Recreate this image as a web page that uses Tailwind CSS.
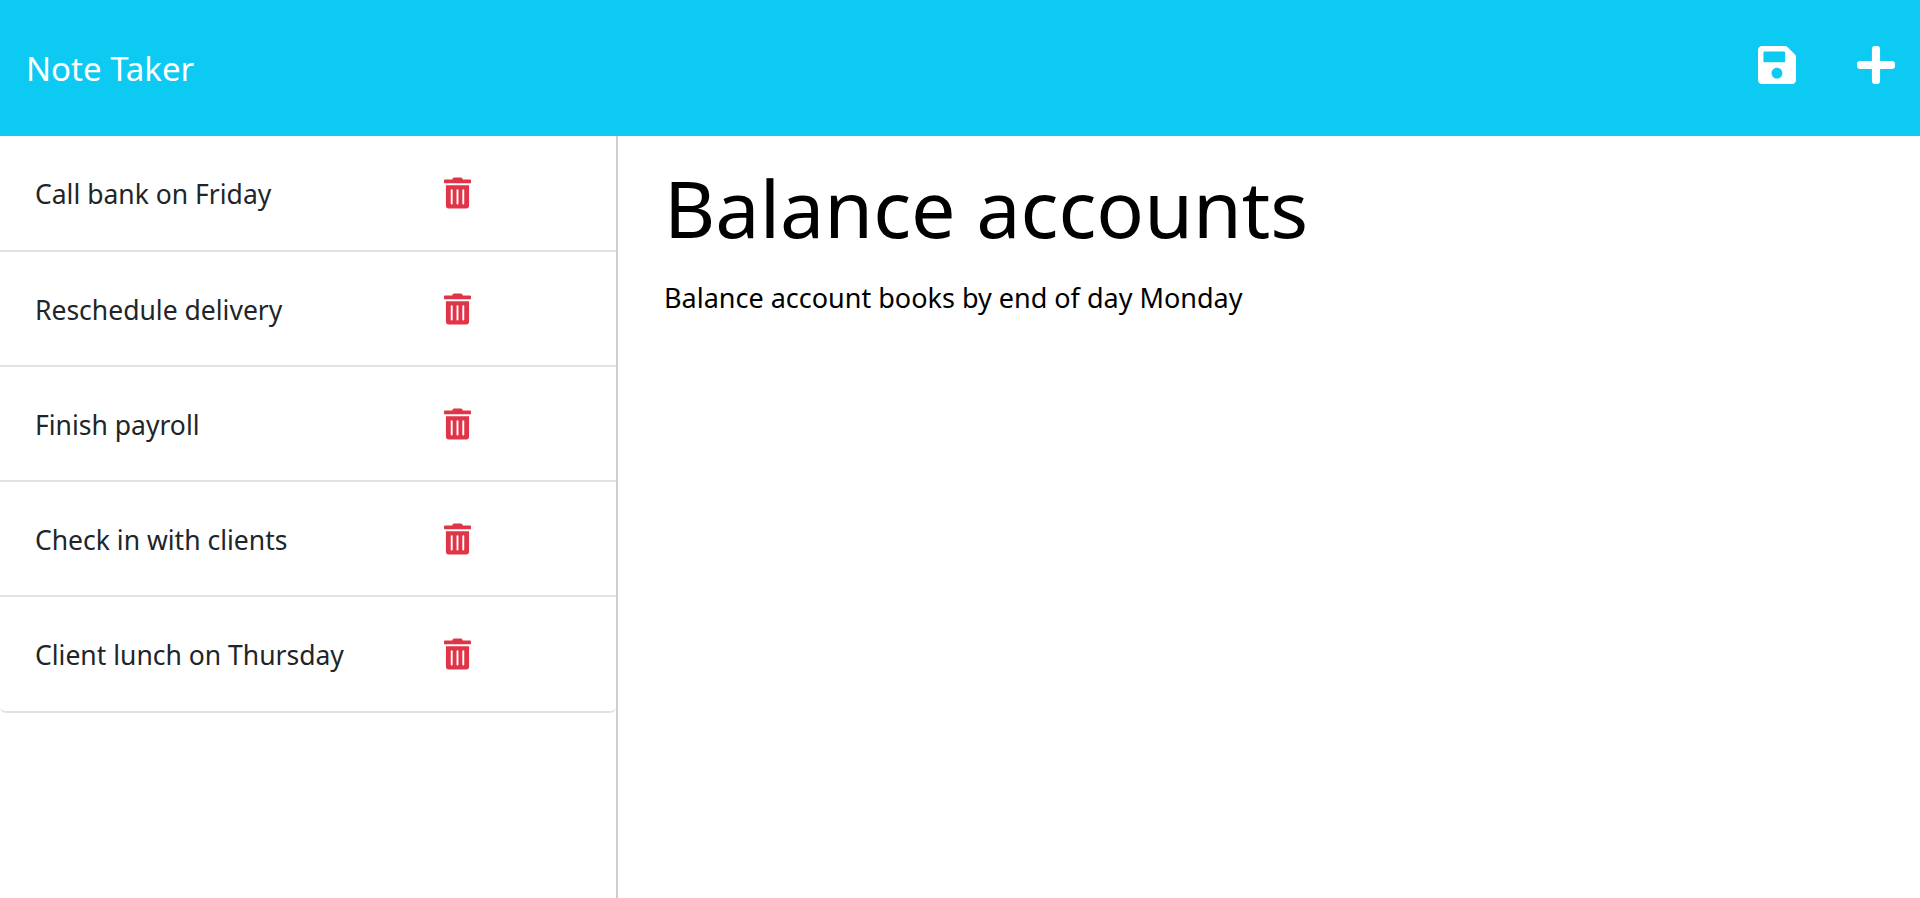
<!DOCTYPE html>
<html lang="en">
<head>
    <meta charset="UTF-8">
    <meta name="viewport" content="width=device-width, initial-scale=1.0">
    <title>Note Taker</title>
    <script src="https://cdn.jsdelivr.net/npm/@tailwindcss/browser@4"></script>
</head>
<body class="bg-white font-['Noto_Sans',sans-serif] h-[898px] overflow-hidden">
    <!-- Header -->
    <header class="h-[136px] bg-[#0dcaf2] flex items-center justify-between pl-[26px] pr-[25px]">
        <a class="text-white text-[33px] leading-none">Note Taker</a>
        <div class="flex items-center gap-[61px] -mt-[7px]">
            <svg class="w-[38px] h-[38px] text-white" viewBox="0 0 448 448" fill="currentColor"><path d="M433.9 97.9l-83.9-83.9C341 5 328.8 0 316.1 0H48C21.5 0 0 21.5 0 48v352c0 26.5 21.5 48 48 48h352c26.500 0 48-21.500 48-48V131.900c0-12.700-5-24.900-14.100-34zM224 384c-35.300 0-64-28.700-64-64s28.700-64 64-64 64 28.700 64 64-28.700 64-64 64zM320 79.500V180c0 6.600-5.400 12-12 12H76c-6.600 0-12-5.400-12-12V76c0-6.600 5.400-12 12-12h228.500c3.200 0 6.200 1.300 8.500 3.500l3.500 3.500c2.200 2.300 3.500 5.300 3.500 8.500z"/></svg>
            <svg class="w-[38px] h-[38px] text-white" viewBox="0 0 448 448" fill="currentColor"><path d="M416 176H272V32c0-17.700-14.300-32-32-32h-32c-17.700 0-32 14.300-32 32v144H32c-17.700 0-32 14.300-32 32v32c0 17.700 14.300 32 32 32h144v144c0 17.700 14.300 32 32 32h32c17.700 0 32-14.300 32-32V272h144c17.700 0 32-14.300 32-32v-32c0-17.700-14.300-32-32-32z"/></svg>
        </div>
    </header>

    <main class="flex h-[762px]">
        <!-- Note list -->
        <aside class="w-[618px] shrink-0 border-r-2 border-[#cfcfcf]">
            <ul class="pt-[1px] border-b-2 border-[#e2e2e2] rounded-b-md">
                <li class="h-[115px] flex items-center pl-[35px] border-b-2 border-[#e2e2e2] text-[#212529] text-[26.500px]">
                    <span class="w-[409px] relative top-[1px]">Call bank on Friday</span>
                    <svg class="w-[27px] h-[32px] text-[#e03448] -mt-[2px]" viewBox="0 0 448 512" fill="currentColor"><path d="M32 464a48 48 0 0 0 48 48h288a48 48 0 0 0 48-48V128H32zm272-256a16 16 0 0 1 32 0v224a16 16 0 0 1-32 0zm-96 0a16 16 0 0 1 32 0v224a16 16 0 0 1-32 0zm-96 0a16 16 0 0 1 32 0v224a16 16 0 0 1-32 0zM432 32H312l-9.400-18.700A24 24 0 0 0 281.100 0H166.800a23.700 23.700 0 0 0-21.400 13.300L136 32H16A16 16 0 0 0 0 48v32a16 16 0 0 0 16 16h416a16 16 0 0 0 16-16V48a16 16 0 0 0-16-16z"/></svg>
                </li>
                <li class="h-[115px] flex items-center pl-[35px] pt-[2px] border-b-2 border-[#e2e2e2] text-[#212529] text-[26.500px]">
                    <span class="w-[409px] relative top-[1px]">Reschedule delivery</span>
                    <svg class="w-[27px] h-[32px] text-[#e03448] -mt-[2px]" viewBox="0 0 448 512" fill="currentColor"><path d="M32 464a48 48 0 0 0 48 48h288a48 48 0 0 0 48-48V128H32zm272-256a16 16 0 0 1 32 0v224a16 16 0 0 1-32 0zm-96 0a16 16 0 0 1 32 0v224a16 16 0 0 1-32 0zm-96 0a16 16 0 0 1 32 0v224a16 16 0 0 1-32 0zM432 32H312l-9.400-18.700A24 24 0 0 0 281.100 0H166.800a23.700 23.700 0 0 0-21.400 13.300L136 32H16A16 16 0 0 0 0 48v32a16 16 0 0 0 16 16h416a16 16 0 0 0 16-16V48a16 16 0 0 0-16-16z"/></svg>
                </li>
                <li class="h-[115px] flex items-center pl-[35px] pt-[2px] border-b-2 border-[#e2e2e2] text-[#212529] text-[26.500px]">
                    <span class="w-[409px] relative top-[1px]">Finish payroll</span>
                    <svg class="w-[27px] h-[32px] text-[#e03448] -mt-[2px]" viewBox="0 0 448 512" fill="currentColor"><path d="M32 464a48 48 0 0 0 48 48h288a48 48 0 0 0 48-48V128H32zm272-256a16 16 0 0 1 32 0v224a16 16 0 0 1-32 0zm-96 0a16 16 0 0 1 32 0v224a16 16 0 0 1-32 0zm-96 0a16 16 0 0 1 32 0v224a16 16 0 0 1-32 0zM432 32H312l-9.400-18.700A24 24 0 0 0 281.100 0H166.800a23.700 23.700 0 0 0-21.400 13.300L136 32H16A16 16 0 0 0 0 48v32a16 16 0 0 0 16 16h416a16 16 0 0 0 16-16V48a16 16 0 0 0-16-16z"/></svg>
                </li>
                <li class="h-[115px] flex items-center pl-[35px] pt-[2px] border-b-2 border-[#e2e2e2] text-[#212529] text-[26.500px]">
                    <span class="w-[409px] relative top-[1px]">Check in with clients</span>
                    <svg class="w-[27px] h-[32px] text-[#e03448] -mt-[2px]" viewBox="0 0 448 512" fill="currentColor"><path d="M32 464a48 48 0 0 0 48 48h288a48 48 0 0 0 48-48V128H32zm272-256a16 16 0 0 1 32 0v224a16 16 0 0 1-32 0zm-96 0a16 16 0 0 1 32 0v224a16 16 0 0 1-32 0zm-96 0a16 16 0 0 1 32 0v224a16 16 0 0 1-32 0zM432 32H312l-9.400-18.700A24 24 0 0 0 281.100 0H166.800a23.700 23.700 0 0 0-21.400 13.300L136 32H16A16 16 0 0 0 0 48v32a16 16 0 0 0 16 16h416a16 16 0 0 0 16-16V48a16 16 0 0 0-16-16z"/></svg>
                </li>
                <li class="h-[114px] flex items-center pl-[35px] pt-[2px] text-[#212529] text-[26.500px]">
                    <span class="w-[409px] relative top-[1px]">Client lunch on Thursday</span>
                    <svg class="w-[27px] h-[32px] text-[#e03448] -mt-[2px]" viewBox="0 0 448 512" fill="currentColor"><path d="M32 464a48 48 0 0 0 48 48h288a48 48 0 0 0 48-48V128H32zm272-256a16 16 0 0 1 32 0v224a16 16 0 0 1-32 0zm-96 0a16 16 0 0 1 32 0v224a16 16 0 0 1-32 0zm-96 0a16 16 0 0 1 32 0v224a16 16 0 0 1-32 0zM432 32H312l-9.400-18.700A24 24 0 0 0 281.100 0H166.800a23.700 23.700 0 0 0-21.400 13.300L136 32H16A16 16 0 0 0 0 48v32a16 16 0 0 0 16 16h416a16 16 0 0 0 16-16V48a16 16 0 0 0-16-16z"/></svg>
                </li>
            </ul>
        </aside>

        <!-- Active note -->
        <section class="flex-1 pl-[46px] text-black">
            <h1 class="text-[79px] leading-none mt-[32px]">Balance accounts</h1>
            <p class="text-[27px] leading-none mt-[37px]">Balance account books by end of day Monday</p>
        </section>
    </main>
</body>
</html>
